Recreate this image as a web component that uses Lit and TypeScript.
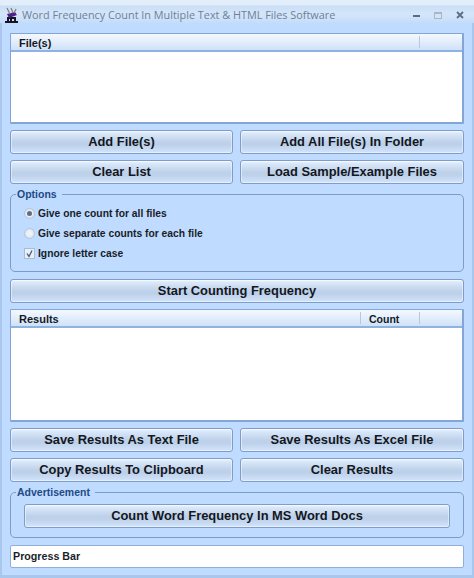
import { LitElement, html, css, svg } from "lit";
import { customElement } from "lit/decorators.js";

const icon = svg`<svg class="appicon" viewBox="0 0 16 16" width="16" height="16">
  <path d="M1 14h13v2H1zM3 10h9v4h-2v-2H8v2H6v-2H5v2H3z" fill="#1a1420"/>
  <path d="M3 7l8-2 2 3-8 3z" fill="#4b1f8f"/>
  <path d="M3 1l3 6M7 1l2 5M12 2l-2 4" stroke="#8a8078" stroke-width="1.3" fill="none"/>
  <path d="M12 7l3-1v2z" fill="#e8e0d0"/>
</svg>`;

@customElement("app-root")
export class AppRoot extends LitElement {
  static styles = css`
    :host {
      display: block;
      width: 474px;
      height: 578px;
      overflow: hidden;
      font-family: "Liberation Sans", Arial, sans-serif;
      background: #bfdbff;
      color: #111;
    }
    .titlebar {
      height: 23px;
      box-sizing: border-box;
      display: flex;
      align-items: center;
      padding: 6px 10px 0 4px;
      background: linear-gradient(#e3eefb 0, #e3eefb 5px, #c9def5 6px, #d5e6fa 14px, #c5dcf8 23px);
      font-family: "Open Sans", "Noto Sans", sans-serif;
      font-size: 10.85px;
      color: #6f7f96;
    }
    .appicon { flex: none; margin-right: 2px; }
    .ttl { flex: 1; white-space: nowrap; }
    .wc { display: flex; align-items: center; gap: 14px; }
    .wc svg { display: block; }
    .body {
      display: flex;
      flex-direction: column;
      height: 555px;
      box-sizing: border-box;
      padding: 10px 8px 0 8px;
      border-left: 2px solid #a9c6ec;
      border-right: 2px solid #a9c6ec;
      border-bottom: 3px solid #a9c6ec;
    }
    .body > * { flex: none; }
    .list {
      background: #fff;
      border: 1px solid #84a6d6;
      box-sizing: border-box;
      border-right-width: 2px;
      border-bottom-width: 2px;
      border-radius: 1px;
    }
    .list.files { height: 91px; }
    .list.results { height: 113px; margin-top: 6px; }
    .lhead {
      display: flex;
      height: 18px;
      box-sizing: border-box;
      background: linear-gradient(#f3f8fe, #e4effc 45%, #cfe1f8);
      border-bottom: 2px solid #8fb2e2;
      font-size: 11px;
      font-weight: bold;
      line-height: 18px;
      color: #151a24;
    }
    .lhead div { box-sizing: border-box; white-space: nowrap; }
    .lhead .c1 { flex: 1; padding-left: 8px; }
    .lhead .c2 { width: 59px; border-left: 1px solid #b6c8de; margin: 2px 0; line-height: 14px; padding-left: 8px; font-size: 10.5px; }
    .lhead .c3 { width: 43px; border-left: 1px solid #b6c8de; margin: 2px 0; }
    .row {
      display: grid;
      grid-template-columns: 223px 224px;
      column-gap: 7px;
      margin-top: 6px;
    }
    .btn {
      height: 24px;
      box-sizing: border-box;
      padding-bottom: 2px;
      display: flex;
      align-items: center;
      justify-content: center;
      border: 1px solid #7e9ec9;
      border-radius: 3px;
      background: linear-gradient(#f0f6fe 0, #d9e7f9 12%, #bfd2ea 50%, #bcd0ea 62%, #d3e4fa 100%);
      box-shadow: inset 0 0 0 1px rgba(255, 255, 255, 0.45);
      font-size: 12.9px;
      font-weight: bold;
      color: #14171d;
      white-space: nowrap;
    }
    .group {
      position: relative;
      border: 1px solid #7d9dc9;
      border-radius: 5px;
      box-sizing: border-box;
    }
    .legend {
      position: absolute;
      left: 5px;
      top: -7px;
      padding: 0 5px 0 1px;
      background: #bfdbff;
      font-size: 10.5px;
      line-height: 12px;
      font-weight: bold;
      color: #1f4a86;
    }
    .group.options {
      margin-top: 10px;
      height: 78px;
      padding: 11px 0 0 13px;
      display: flex;
      flex-direction: column;
      gap: 6px;
    }
    .opt {
      display: flex;
      align-items: center;
      height: 14px;
      font-size: 10.3px;
      font-weight: bold;
      color: #1a1d28;
      white-space: nowrap;
    }
    .radio {
      width: 11px;
      height: 11px;
      border-radius: 50%;
      margin-right: 3px;
      box-sizing: border-box;
      border: 1px solid #b5c6da;
      background: radial-gradient(circle at 50% 50%, #eef3f9 30%, #ccd8e6 100%);
      display: flex;
      align-items: center;
      justify-content: center;
    }
    .radio.on::after {
      content: "";
      width: 5px;
      height: 5px;
      border-radius: 50%;
      background: #5f6e80;
    }
    .check {
      width: 11px;
      height: 11px;
      margin-right: 3px;
      box-sizing: border-box;
      border: 1px solid #a9bcd3;
      background: #e8eff8;
      display: block;
    }
    .check svg { display: block; }
    .start { margin-top: 7px; }
    .group.ad {
      margin-top: 10px;
      height: 46px;
      padding: 11px 13px 0 13px;
    }
    .progress {
      margin-top: 7px;
      height: 23px;
      box-sizing: border-box;
      background: #fff;
      border: 1px solid #8fb0dc;
      border-radius: 2px;
      padding-left: 2px;
      font-size: 10.7px;
      font-weight: bold;
      line-height: 21px;
      color: #1b1f2b;
    }
  `;

  render() {
    return html`
      <div class="titlebar">
        ${icon}
        <span class="ttl">Word Frequency Count In Multiple Text &amp; HTML Files Software</span>
        <div class="wc">
          <svg width="7" height="7" viewBox="0 0 7 7"><rect x="0" y="4" width="7" height="2" fill="#5c6c84"/></svg>
          <svg width="8" height="8" viewBox="0 0 8 8"><rect x="0.5" y="1.5" width="7" height="6" fill="#d5e3f5" stroke="#a9b6c8"/><rect x="0" y="1" width="8" height="2" fill="#a9b6c8"/></svg>
          <svg width="8" height="8" viewBox="0 0 8 8"><path d="M1 1l6 6M7 1l-6 6" stroke="#5c6c84" stroke-width="1.8"/></svg>
        </div>
      </div>
      <div class="body">
        <div class="list files">
          <div class="lhead"><div class="c1">File(s)</div><div class="c3">&nbsp;</div></div>
        </div>
        <div class="row">
          <div class="btn">Add File(s)</div>
          <div class="btn">Add All File(s) In Folder</div>
        </div>
        <div class="row">
          <div class="btn">Clear List</div>
          <div class="btn">Load Sample/Example Files</div>
        </div>
        <div class="group options">
          <div class="legend">Options</div>
          <div class="opt"><span class="radio on"></span>Give one count for all files</div>
          <div class="opt"><span class="radio"></span>Give separate counts for each file</div>
          <div class="opt">
            <span class="check"><svg width="9" height="9" viewBox="0 0 9 9"><path d="M2 4.5l2 3 3-6" stroke="#4d5c70" stroke-width="1.3" fill="none"/></svg></span>
            Ignore letter case
          </div>
        </div>
        <div class="btn start">Start Counting Frequency</div>
        <div class="list results">
          <div class="lhead"><div class="c1">Results</div><div class="c2">Count</div><div class="c3"></div></div>
        </div>
        <div class="row">
          <div class="btn">Save Results As Text File</div>
          <div class="btn">Save Results As Excel File</div>
        </div>
        <div class="row">
          <div class="btn">Copy Results To Clipboard</div>
          <div class="btn">Clear Results</div>
        </div>
        <div class="group ad">
          <div class="legend">Advertisement</div>
          <div class="btn">Count Word Frequency In MS Word Docs</div>
        </div>
        <div class="progress">Progress Bar</div>
      </div>
    `;
  }
}
